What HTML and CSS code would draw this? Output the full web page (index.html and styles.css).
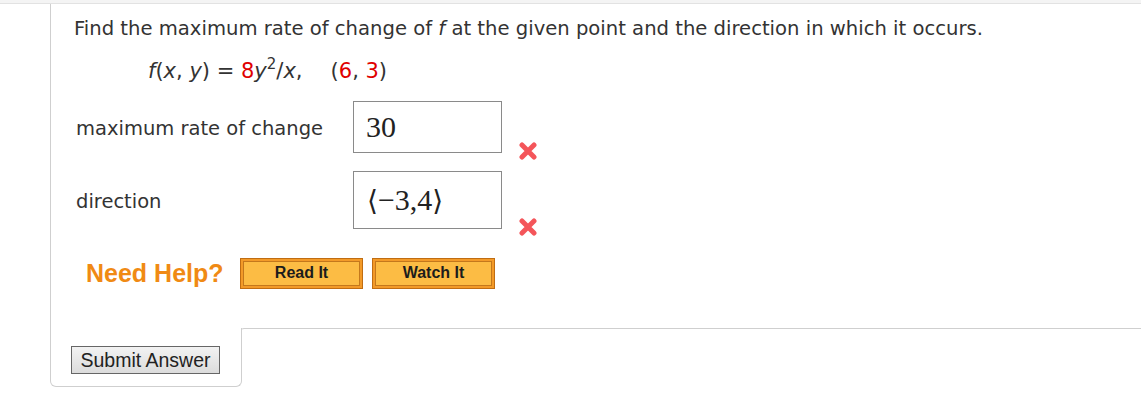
FILE: index.html
```html
<!DOCTYPE html>
<html>
<head>
<meta charset="utf-8">
<link rel="stylesheet" href="styles.css">
</head>
<body>
<div class="topbar"></div>
<div class="panel">
  <p class="question">Find the maximum rate of change of <i>f</i> at the given point and the direction in which it occurs.</p>
  <p class="func"><i>f</i>(<i>x</i>, <i>y</i>) = <span class="red">8</span><i>y</i><sup>2</sup>/<i>x</i>,<span class="sp"></span>(<span class="red">6</span>, <span class="red">3</span>)</p>
  <div class="answers">
    <div class="row row1">
      <span class="label">maximum rate of change</span>
      <div class="box box1"><span class="math">30</span></div>
      <svg class="xmark" viewBox="0 0 22 18" width="22" height="18"><path d="M5 3 L17 15 M17 3 L5 15" stroke="#f4555a" stroke-width="5" stroke-linecap="round"/></svg>
    </div>
    <div class="row row2">
      <span class="label">direction</span>
      <div class="box box2"><span class="math"><span class="ang">⟨</span>−3,4<span class="ang">⟩</span></span></div>
      <svg class="xmark" viewBox="0 0 22 18" width="22" height="18"><path d="M5 3 L17 15 M17 3 L5 15" stroke="#f4555a" stroke-width="5" stroke-linecap="round"/></svg>
    </div>
  </div>
  <div class="help">
    <span class="need">Need Help?</span>
    <button class="hbtn read"><span>Read It</span></button>
    <button class="hbtn watch"><span>Watch It</span></button>
  </div>
</div>
<div class="footer">
  <div class="tab"><button class="submit">Submit Answer</button></div>
  <div class="rest"></div>
</div>
</body>
</html>
```
FILE: styles.css
```css
html, body {
  margin: 0;
  padding: 0;
  background: #fff;
}
.topbar {
  height: 3px;
  background: #f4f4f4;
  border-bottom: 1px solid #e2e2e2;
}
.panel {
  margin-left: 50px;
  border-left: 1px solid #cfcfcf;
  padding: 13px 0 0 23px;
  height: 324px;
  box-sizing: border-box;
  font-family: "DejaVu Sans", Verdana, sans-serif;
  color: #333;
}
.question {
  margin: 0;
  font-size: 19.6px;
  line-height: 24px;
}
.func {
  margin: 18px 0 0 74px;
  font-size: 21px;
  line-height: 24px;
}
.sp {
  display: inline-block;
  width: 28px;
}
.func sup {
  font-size: 15px;
  line-height: 0;
  vertical-align: 9px;
}
.red {
  color: #e00000;
}
.answers {
  margin-top: 18px;
  display: flex;
  flex-direction: column;
  gap: 18px;
}
.row {
  display: flex;
  align-items: center;
}
.label {
  width: 279px;
  padding-left: 2px;
  box-sizing: border-box;
  font-size: 19.5px;
  line-height: 24px;
  margin-top: 4px;
}
.box {
  width: 149px;
  box-sizing: border-box;
  border: 1px solid #8a8a8a;
  background: #fff;
  display: flex;
  padding-left: 12px;
}
.box1 {
  height: 52px;
  align-items: flex-start;
  padding-top: 10px;
}
.box2 {
  height: 58px;
  align-items: center;
  padding-left: 13px;
}
.math {
  font-family: "Liberation Serif", "DejaVu Serif", serif;
  font-size: 30px;
  line-height: 30px;
  color: #222;
}
.ang {
  font-family: "DejaVu Serif", serif;
  font-size: 28px;
  font-weight: 200;
}
.xmark {
  align-self: flex-end;
  margin-left: 15px;
  margin-bottom: -7px;
}
.help {
  margin-top: 29px;
  display: flex;
  align-items: center;
  padding-left: 12px;
}
.need {
  font-family: "Liberation Sans", Arial, sans-serif;
  font-weight: bold;
  font-size: 25px;
  color: #f08a14;
  width: 154px;
}
.hbtn {
  width: 123px;
  height: 31px;
  padding: 2px;
  margin: 0 9px 0 0;
  border: 1px solid #c06d12;
  background: #f39a28;
  box-sizing: border-box;
  cursor: pointer;
}
.hbtn span {
  display: block;
  height: 100%;
  box-sizing: border-box;
  border: 1px solid #c4781c;
  background: #fcbc44;
  font-family: "Liberation Sans", Arial, sans-serif;
  font-weight: bold;
  font-size: 16px;
  line-height: 22px;
  color: #1c1c1c;
}
.footer {
  display: flex;
}
.tab {
  margin-left: 50px;
  width: 192px;
  height: 59px;
  box-sizing: border-box;
  border: 1px solid #cfcfcf;
  border-top: none;
  border-radius: 0 0 6px 6px;
  padding: 18px 0 0 20px;
}
.rest {
  flex: 1;
  border-top: 1px solid #cfcfcf;
  border-top-left-radius: 3px;
  margin-left: -1px;
  border-left: 1px solid transparent;
}
.submit {
  width: 149px;
  height: 28px;
  margin: 0;
  padding: 0;
  border: 1px solid #666;
  background: linear-gradient(#f2f2f2, #dcdcdc);
  font-family: "Liberation Sans", Arial, sans-serif;
  font-size: 19.5px;
  line-height: 26px;
  color: #222;
}
```
